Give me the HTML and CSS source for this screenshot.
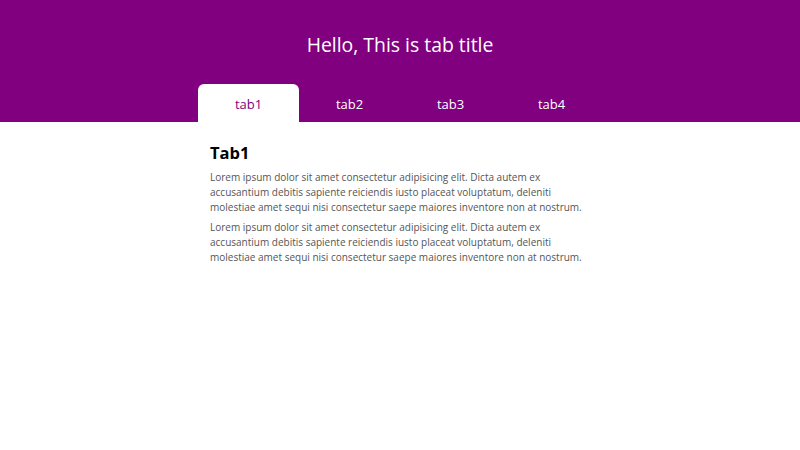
FILE: index.html
```html
<!DOCTYPE html>
<html lang="en">
  <head>
    <meta charset="UTF-8" />
    <title>Tabs</title>
    <link rel="stylesheet" href="styles.css">
  </head>
  <body>
    <header class="top">
      <h1 class="title">Hello, This is tab title</h1>
      <nav class="tabs">
        <button class="tab active">tab1</button>
        <button class="tab">tab2</button>
        <button class="tab">tab3</button>
        <button class="tab">tab4</button>
      </nav>
    </header>

    <section class="panel">
      <h2 class="panel-title">Tab1</h2>
      <p>
        Lorem ipsum dolor sit amet consectetur adipisicing elit. Dicta autem ex
        accusantium debitis sapiente reiciendis iusto placeat voluptatum, deleniti
        molestiae amet sequi nisi consectetur saepe maiores inventore non at nostrum.
      </p>
      <p>
        Lorem ipsum dolor sit amet consectetur adipisicing elit. Dicta autem ex
        accusantium debitis sapiente reiciendis iusto placeat voluptatum, deleniti
        molestiae amet sequi nisi consectetur saepe maiores inventore non at nostrum.
      </p>
    </section>
  </body>
</html>
```

FILE: styles.css
```css
* {
  box-sizing: border-box;
}
body {
  margin: 0;
  font-family: "Open Sans", "DejaVu Sans", sans-serif;
  background: #fff;
}
.top {
  background-color: #800080;
  padding-top: 33px;
}
.title {
  margin: 0;
  color: #fff;
  font-size: 19.4px;
  font-weight: 400;
  text-align: center;
  line-height: 24px;
}
.tabs {
  display: flex;
  width: 404px;
  margin: 27px auto 0;
}
.tab {
  flex: 1;
  height: 38px;
  border: none;
  background: none;
  color: #fff;
  font-family: inherit;
  font-size: 13px;
  padding: 0;
  padding-top: 2px;
  border-radius: 6px 6px 0 0;
  cursor: pointer;
}
.tab.active {
  background: #fff;
  color: #800080;
}
.panel {
  width: 404px;
  margin: 0 auto;
  padding: 20px 8px 20px 12px;
}
.panel-title {
  margin: 0 0 6px;
  font-size: 16.5px;
  font-weight: 700;
  line-height: 22px;
  color: #000;
}
.panel p {
  margin: 0 0 5px;
  font-size: 10px;
  line-height: 15px;
  color: #555;
}
```
